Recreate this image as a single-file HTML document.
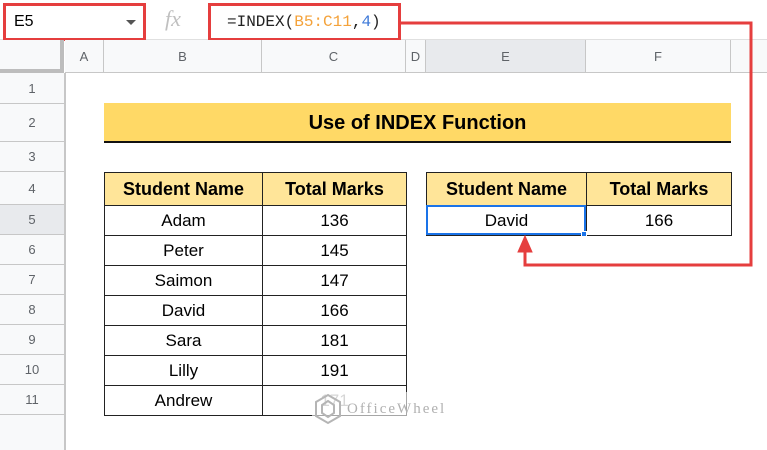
<!DOCTYPE html><html><head><style>
*{margin:0;padding:0;box-sizing:border-box}
body{width:767px;height:450px;overflow:hidden;background:#fff;font-family:"Liberation Sans",Arial,sans-serif;position:relative}
.a{position:absolute}
.ch{position:absolute;top:40px;height:33px;background:#f8f9fa;border-right:1px solid #c7c7c7;border-bottom:1px solid #c7c7c7;color:#5f6368;font-size:13px;text-align:center;line-height:33px}
.rh{position:absolute;left:0;width:64px;background:#f8f9fa;border-bottom:1px solid #c7c7c7;color:#5f6368;font-size:13px;text-align:center}
.c{position:absolute;border:1px solid #222;text-align:center;font-size:17px;color:#000}
.h{background:#ffe599;font-weight:bold;font-size:18px}
</style></head><body>
<div class="a" style="left:0;top:0;width:767px;height:40px;background:#fff;border-bottom:1px solid #e0e0e0"></div>
<div class="a" style="left:3px;top:3px;width:143px;height:38px;border:3px solid #e53e3e;font-size:16px;line-height:32px;padding-left:8px;color:#000">E5<span class="a" style="left:120px;top:14px;width:0;height:0;border-left:5px solid transparent;border-right:5px solid transparent;border-top:5px solid #555"></span></div>
<div class="a" style="left:165px;top:6px;font-family:'Liberation Serif',serif;font-style:italic;font-size:22px;color:#c0c0c0">fx</div>
<div class="a" style="left:208px;top:3px;width:193px;height:38px;border:3px solid #e53e3e;font-family:'Liberation Mono',monospace;font-size:16px;line-height:32px;padding-left:16px;color:#222">=INDEX(<span style="color:#f4a23a">B5:C11</span>,<span style="color:#3c78d8">4</span>)</div>
<div class="ch" style="left:0;width:64px;border-right:4px solid #bdbdbd;border-bottom:4px solid #bdbdbd"></div>
<div class="ch" style="left:65px;width:39px">A</div>
<div class="ch" style="left:104px;width:158px">B</div>
<div class="ch" style="left:262px;width:144px">C</div>
<div class="ch" style="left:406px;width:20px">D</div>
<div class="ch" style="left:426px;width:160px;background:#e8eaed">E</div>
<div class="ch" style="left:586px;width:145px">F</div>
<div class="ch" style="left:731px;width:36px;border-right:none"></div>
<div class="a" style="left:64px;top:73px;width:2px;height:377px;background:#c7c7c7"></div>
<div class="rh" style="top:73px;height:31px;line-height:31px">1</div>
<div class="rh" style="top:104px;height:38px;line-height:38px">2</div>
<div class="rh" style="top:142px;height:30px;line-height:30px">3</div>
<div class="rh" style="top:172px;height:33px;line-height:33px">4</div>
<div class="rh" style="top:205px;height:30px;line-height:30px;background:#e8eaed">5</div>
<div class="rh" style="top:235px;height:30px;line-height:30px">6</div>
<div class="rh" style="top:265px;height:30px;line-height:30px">7</div>
<div class="rh" style="top:295px;height:30px;line-height:30px">8</div>
<div class="rh" style="top:325px;height:30px;line-height:30px">9</div>
<div class="rh" style="top:355px;height:30px;line-height:30px">10</div>
<div class="rh" style="top:385px;height:30px;line-height:30px">11</div>
<div class="rh" style="top:415px;height:35px;border-bottom:none"></div>
<div class="a" style="left:104px;top:103px;width:627px;height:40px;background:#ffd966;border-bottom:2px solid #111;text-align:center;font-weight:bold;font-size:20px;line-height:40px">Use of INDEX Function</div>
<div class="c h" style="left:104px;top:172px;width:159px;height:34px;line-height:32px">Student Name</div>
<div class="c h" style="left:262px;top:172px;width:145px;height:34px;line-height:32px">Total Marks</div>
<div class="c" style="left:104px;top:205px;width:159px;height:31px;line-height:29px">Adam</div><div class="c" style="left:262px;top:205px;width:145px;height:31px;line-height:29px">136</div>
<div class="c" style="left:104px;top:235px;width:159px;height:31px;line-height:29px">Peter</div><div class="c" style="left:262px;top:235px;width:145px;height:31px;line-height:29px">145</div>
<div class="c" style="left:104px;top:265px;width:159px;height:31px;line-height:29px">Saimon</div><div class="c" style="left:262px;top:265px;width:145px;height:31px;line-height:29px">147</div>
<div class="c" style="left:104px;top:295px;width:159px;height:31px;line-height:29px">David</div><div class="c" style="left:262px;top:295px;width:145px;height:31px;line-height:29px">166</div>
<div class="c" style="left:104px;top:325px;width:159px;height:31px;line-height:29px">Sara</div><div class="c" style="left:262px;top:325px;width:145px;height:31px;line-height:29px">181</div>
<div class="c" style="left:104px;top:355px;width:159px;height:31px;line-height:29px">Lilly</div><div class="c" style="left:262px;top:355px;width:145px;height:31px;line-height:29px">191</div>
<div class="c" style="left:104px;top:385px;width:159px;height:31px;line-height:29px">Andrew</div><div class="c" style="left:262px;top:385px;width:145px;height:31px;line-height:29px;color:#999">171</div>
<div class="a" style="left:312px;top:392px;width:146px;height:34px;background:rgba(255,255,255,.6)"></div>
<svg class="a" style="left:313px;top:393px" width="30" height="32"><path d="M15 2 L27 9 L27 23 L15 30 L3 23 L3 9 Z M15 8 L21 12 L21 20 L15 24 L9 20 L9 12 Z" fill="none" stroke="#b5b5b5" stroke-width="2"/></svg>
<div class="a" style="left:347px;top:401px;font-family:'Liberation Serif',serif;font-size:15px;letter-spacing:2px;color:#b0b0b0">OfficeWheel</div>
<div class="c h" style="left:426px;top:172px;width:161px;height:34px;line-height:32px">Student Name</div>
<div class="c h" style="left:586px;top:172px;width:146px;height:34px;line-height:32px">Total Marks</div>
<div class="c" style="left:426px;top:205px;width:161px;height:31px;line-height:29px">David</div>
<div class="c" style="left:586px;top:205px;width:146px;height:31px;line-height:29px">166</div>
<div class="a" style="left:426px;top:205px;width:160px;height:30px;border:2px solid #1a73e8"></div>
<div class="a" style="left:581px;top:231px;width:6px;height:6px;background:#1a73e8;border:1px solid #fff"></div>
<svg class="a" style="left:0;top:0" width="767" height="450"><path d="M401 23 L751 23 L751 265 L525 265 L525 248" fill="none" stroke="#e53e3e" stroke-width="3"/><path d="M525 236 L518 252 L532 252 Z" fill="#e53e3e" stroke="#e53e3e"/></svg>
</body></html>
